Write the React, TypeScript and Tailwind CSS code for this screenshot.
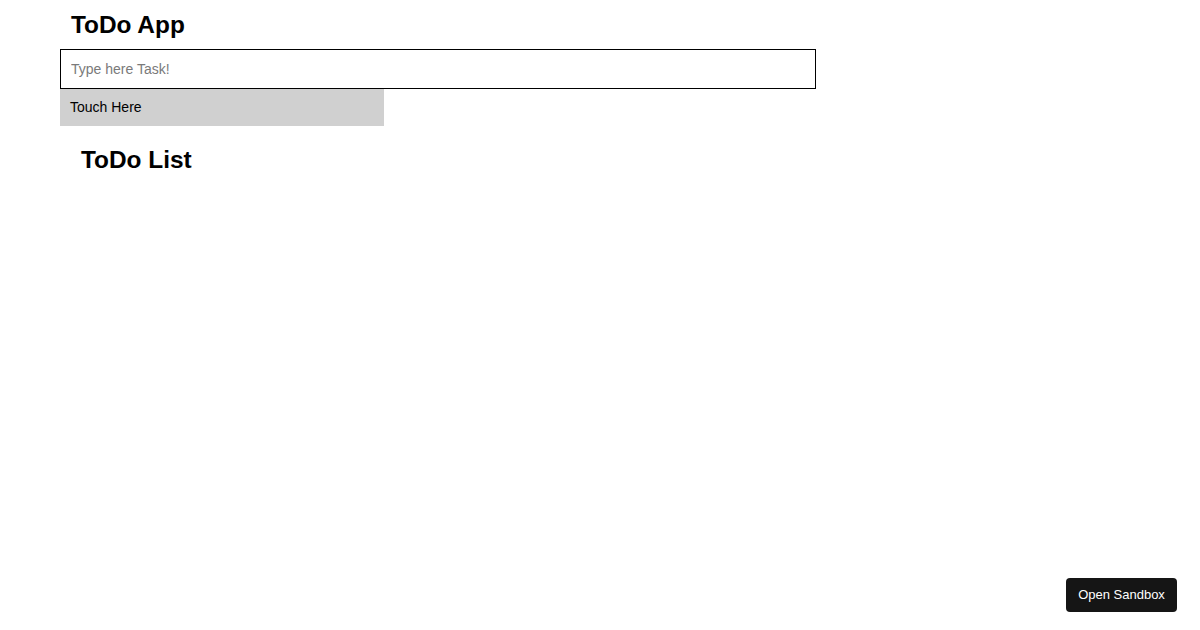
export default function App() {
  return (
    <div className="relative h-[630px] w-full bg-white font-['Liberation_Sans',Arial,sans-serif] text-black">
      <div className="pl-[60px] pt-[9px]">
        <h1 className="pl-[11px] text-[24.4px] leading-8 font-bold">ToDo App</h1>
        <input
          type="text"
          placeholder="Type here Task!"
          className="mt-[8px] block h-[40px] w-[756px] border border-black px-[10px] text-sm outline-none placeholder:text-[#7a7a7a]"
        />
        <button className="block h-[37px] w-[324px] bg-[#d0d0d0] px-[10px] pb-[2px] text-left text-sm text-black">
          Touch Here
        </button>
        <h2 className="mt-[18px] pl-[21px] text-[24.4px] leading-8 font-bold">ToDo List</h2>
      </div>
      <button className="absolute right-[23px] bottom-[18px] h-[34px] w-[111px] rounded-[4px] bg-[#151515] text-[13px] text-white">
        Open Sandbox
      </button>
    </div>
  );
}
